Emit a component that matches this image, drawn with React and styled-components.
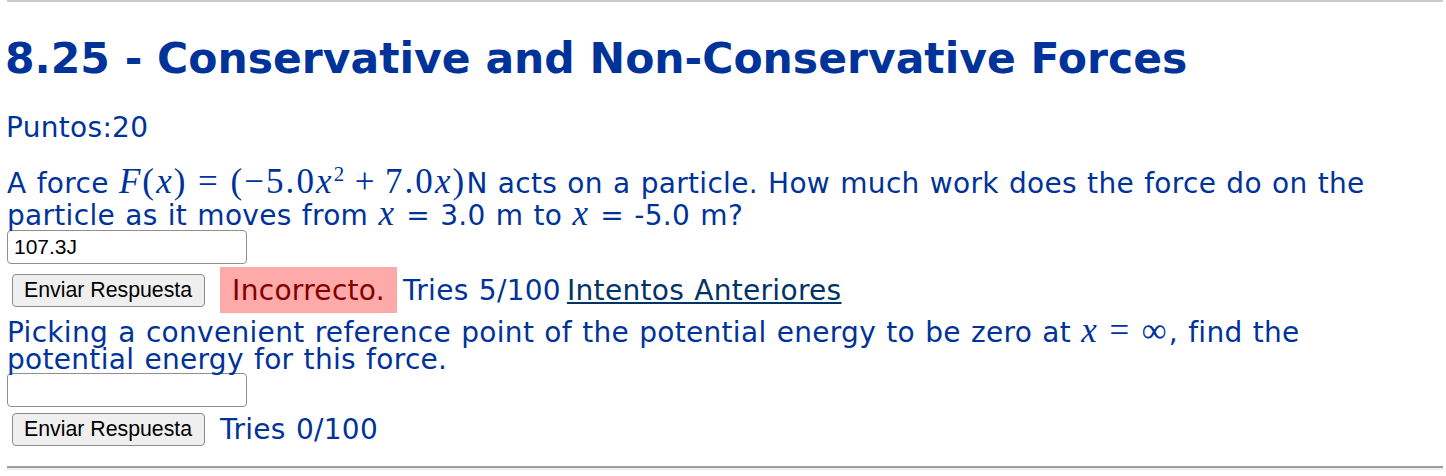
import React from 'react';
import styled, { createGlobalStyle } from 'styled-components';

const GlobalStyle = createGlobalStyle`
  html, body { margin: 0; padding: 0; background: #ffffff; }
  body { font-family: "DejaVu Sans", Verdana, sans-serif; color: #003399; }
`;

const Page = styled.div`
  padding: 0 3px 0 7px;
`;

const TopRule = styled.div`
  height: 0;
  border-top: 2px solid #cccccc;
`;

const BottomRule = styled.div`
  height: 0;
  margin-top: 16.5px;
  border-top: 2px solid #9d9d9d;
  border-bottom: 2px solid #eeeeee;
`;

const Title = styled.h1`
  margin: 31.5px 0 0 -2px;
  font-size: 42.5px;
  line-height: 50px;
  font-weight: bold;
  color: #003399;
`;

const Points = styled.div`
  margin: 30px 0 0 -1px;
  font-size: 28px;
  line-height: 27px;
  letter-spacing: 0.3px;
`;

const Question = styled.div`
  width: 1400px;
  margin-top: ${(p) => p.$gap}px;
  font-size: 28px;
  line-height: 27px;
  letter-spacing: 0.3px;
  word-spacing: 1px;
`;

const Math = styled.span`
  font-family: "Liberation Serif", "DejaVu Serif", serif;
  font-size: 35px;
  line-height: ${(p) => (p.$tall ? 41 : 20)}px;
  letter-spacing: 0.06em;
  word-spacing: 0;
`;

const Var = styled.i`
  font-style: italic;
`;

const Op = styled.span`
  margin: 0 ${(p) => (p.$rel ? 0.3 : 0.24)}em;
`;

const Sup = styled.sup`
  font-size: 0.6em;
  line-height: 0;
  vertical-align: 0.55em;
`;

const Answer = styled.input`
  display: block;
  box-sizing: border-box;
  width: 240px;
  height: 34px;
  margin: ${(p) => p.$gap}px 0 0;
  padding: 0 6px;
  border: 1px solid #8f8f8f;
  border-radius: 4px;
  background: #ffffff;
  font-family: "Liberation Sans", Arial, sans-serif;
  font-size: 21px;
  color: #000000;
  outline: none;
`;

const Row = styled.div`
  display: flex;
  align-items: center;
  min-height: 40px;
  margin-top: 3px;
  font-size: 28px;
  line-height: 27px;
  letter-spacing: 0.3px;
  word-spacing: 1px;
`;

const SubmitButton = styled.button`
  box-sizing: border-box;
  height: 33px;
  margin: 0 15.5px 0 4.5px;
  padding: 0 11.5px;
  border: 1px solid #8a8a8a;
  border-radius: 4px;
  background: #efefef;
  font-family: "Liberation Sans", Arial, sans-serif;
  font-size: 21.3px;
  letter-spacing: 0;
  word-spacing: 0;
  color: #000000;
  cursor: pointer;
`;

const Feedback = styled.span`
  display: flex;
  align-items: center;
  height: 46px;
  margin-right: 6px;
  padding: 0 12px;
  background: #ffaaaa;
  color: #800000;
`;

const Tries = styled.span`
  color: #003399;
`;

const History = styled.a`
  margin-left: 6px;
  color: #003366;
  text-decoration: underline;
  cursor: pointer;
`;

export default function App() {
  return (
    <>
      <GlobalStyle />
      <Page>
        <TopRule />
        <Title>8.25 - Conservative and Non-Conservative Forces</Title>
        <Points>Puntos:20</Points>

        <Question $gap={20.5}>
          A force{' '}
          <Math $tall>
            <Var>F</Var>(<Var>x</Var>)<Op $rel>=</Op>(−5.0<Var>x</Var>
            <Sup>2</Sup>
            <Op>+</Op>7.0<Var>x</Var>)
          </Math>
          N acts on a particle. How much work does the force do on the particle as it moves from{' '}
          <Math>
            <Var>x</Var>
          </Math>{' '}
          = 3.0 m to{' '}
          <Math>
            <Var>x</Var>
          </Math>{' '}
          = -5.0 m?
        </Question>
        <Answer $gap={1} type="text" defaultValue="107.3J" />
        <Row>
          <SubmitButton type="button">Enviar Respuesta</SubmitButton>
          <Feedback>Incorrecto.</Feedback>
          <Tries>Tries 5/100</Tries>
          <History>Intentos Anteriores</History>
        </Row>

        <Question $gap={5.5}>
          Picking a convenient reference point of the potential energy to be zero at{' '}
          <Math>
            <Var>x</Var>
            <Op $rel>=</Op>∞
          </Math>
          , find the potential energy for this force.
        </Question>
        <Answer $gap={0} type="text" defaultValue="" />
        <Row>
          <SubmitButton type="button">Enviar Respuesta</SubmitButton>
          <Tries>Tries 0/100</Tries>
        </Row>

        <BottomRule />
      </Page>
    </>
  );
}
